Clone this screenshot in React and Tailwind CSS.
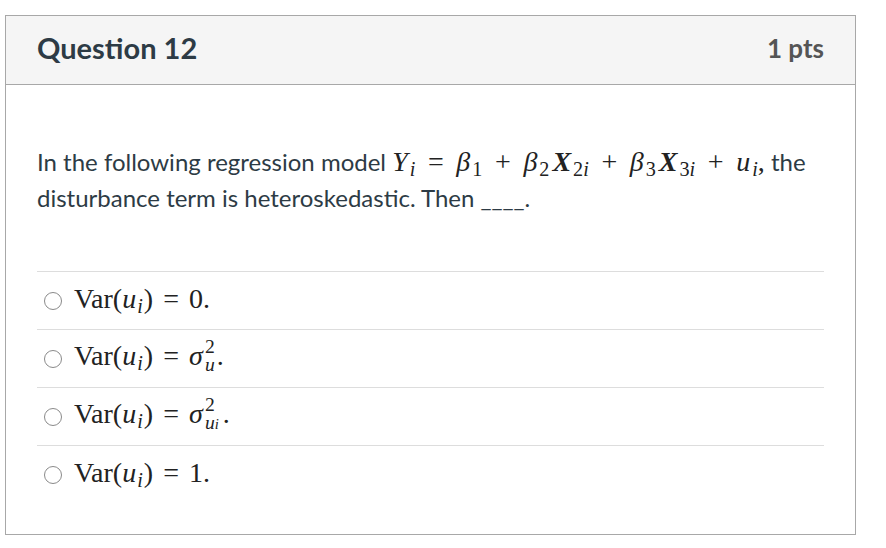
import React from "react";

const mathFont = { fontFamily: '"Liberation Serif", "DejaVu Serif", serif' };

function Sub({ children, gap = "ml-[1px]" }) {
  return <span className={`text-[0.72em] align-[-0.25em] leading-none ${gap}`}>{children}</span>;
}

function Op({ children, wide }) {
  return <span className={wide ? "mx-[0.45em]" : "mx-[0.36em]"}>{children}</span>;
}

function Sigma({ sub }) {
  return (
    <span>
      <i>σ</i>
      <span className="relative inline-block text-[0.7em] ml-[2px] leading-none align-[-0.3em]">
        <span className="absolute left-0 top-[-0.95em] not-italic">2</span>
        <i>{sub}</i>
      </span>
    </span>
  );
}

function Radio() {
  return <span className="w-[18px] h-[18px] rounded-full border border-[#8a8a8a] bg-white shrink-0" />;
}

const options = [
  <>0.</>,
  <>
    <Sigma sub="u" />
    <span className="ml-[2px]">.</span>
  </>,
  <>
    <Sigma sub={<>u<span className="text-[0.75em]">i</span></>} />
    <span className="ml-[4px]">.</span>
  </>,
  <>1.</>,
];

export default function App() {
  return (
    <div className="w-[886px] h-[548px] bg-white pt-[15px] pl-[5px]" style={{ fontFamily: "Lato, sans-serif" }}>
      <div className="w-[851px] h-[520px] border border-[#a8a8a8] flex flex-col">
        <div className="h-[69px] bg-[#f5f5f5] border-b border-[#a8a8a8] flex items-center justify-between px-[31px] pb-[4px]">
          <h2 className="text-[29px] font-bold text-[#2d3b45]">Question 12</h2>
          <span className="text-[26px] font-bold text-[#555]">1 pts</span>
        </div>
        <div className="px-[31px] pt-[59px]">
          <p className="text-[24px] leading-[36px] text-[#2d3b45]">
            In the following regression model{" "}
            <span className="text-[28px] leading-none text-[#222] whitespace-nowrap" style={mathFont}>
              <i>Y</i>
              <Sub gap="ml-[2px]"><i>i</i></Sub>
              <Op wide>=</Op>
              <i>β</i>
              <Sub gap="ml-[2px]">1</Sub>
              <Op wide>+</Op>
              <i>β</i>
              <Sub gap="ml-[2px]">2</Sub>
              <i className="font-bold ml-[3px]">X</i>
              <Sub gap="ml-[2px]">2<i>i</i></Sub>
              <Op wide>+</Op>
              <i>β</i>
              <Sub gap="ml-[2px]">3</Sub>
              <i className="font-bold ml-[3px]">X</i>
              <Sub gap="ml-[2px]">3<i>i</i></Sub>
              <Op wide>+</Op>
              <i>u</i>
              <Sub gap="ml-[2px]"><i>i</i></Sub>,
            </span>{" "}
            the disturbance term is heteroskedastic. Then ____.
          </p>
          <div className="mt-[55px]">
            {options.map((rhs, i) => (
              <div
                key={i}
                className="h-[58px] border-t border-[#ddd] flex items-center gap-[12px] pl-[7px]"
              >
                <Radio />
                <span className="text-[28px] leading-none text-[#222]" style={mathFont}>
                  Var(<i>u</i>
                  <Sub><i>i</i></Sub>
                  <span className="ml-[1px]">)</span>
                  <Op>=</Op>
                  {rhs}
                </span>
              </div>
            ))}
          </div>
        </div>
      </div>
    </div>
  );
}
